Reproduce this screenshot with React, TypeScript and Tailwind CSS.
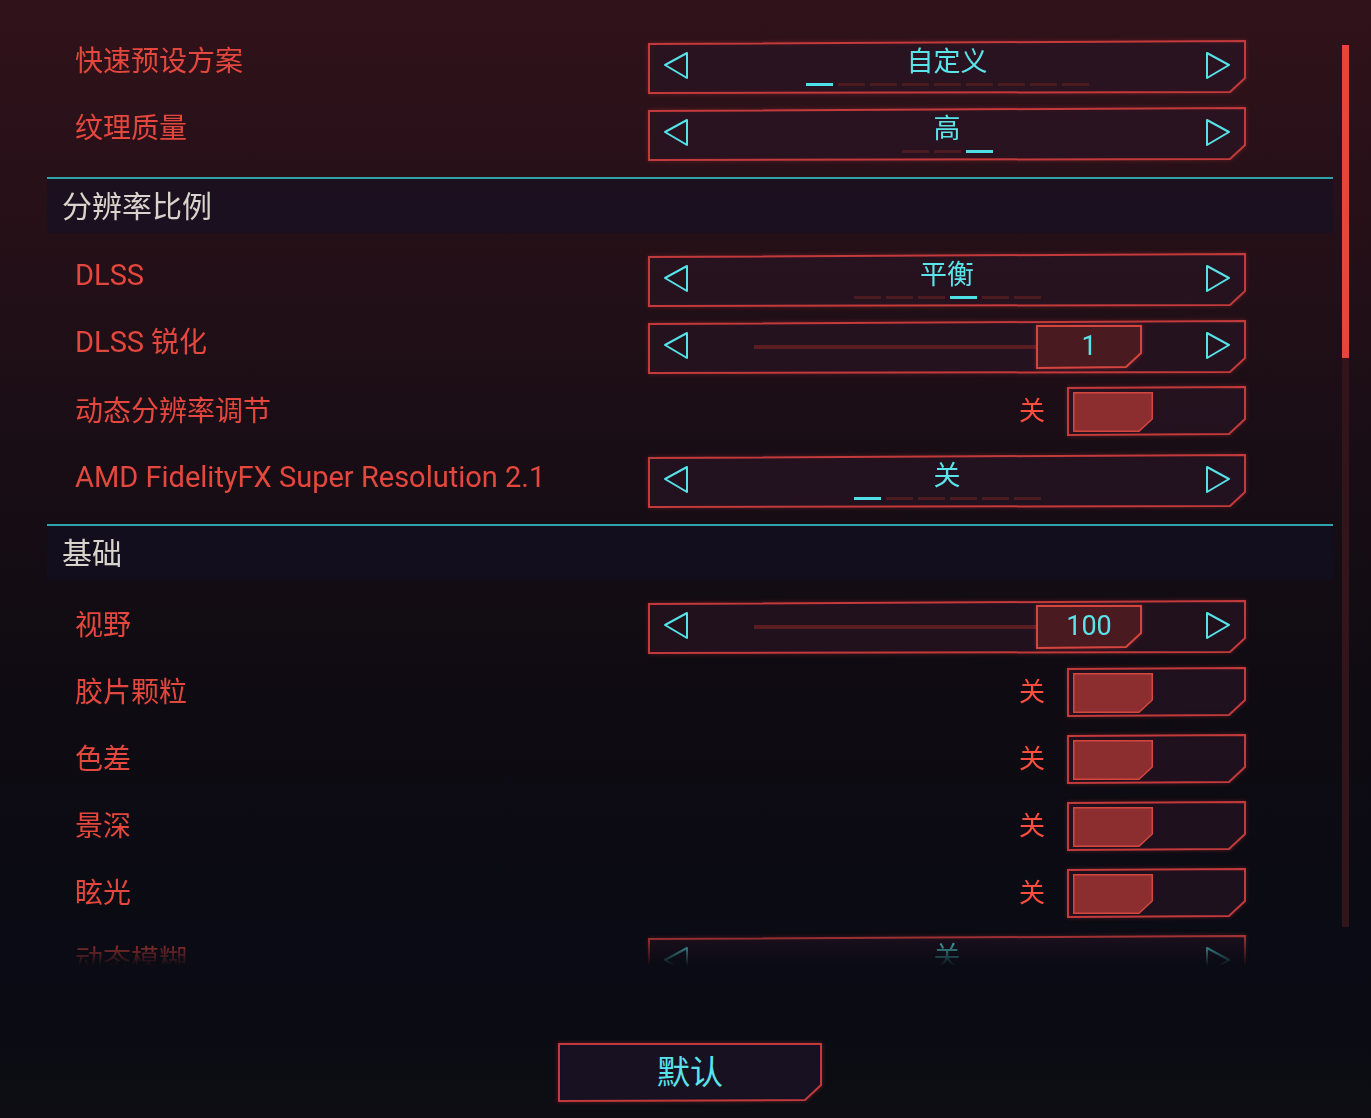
import React from 'react'

const TEAL = '#56e2e8'

type FrameProps = { w: number; h: number; c: number; rise?: number; fill: string; stroke: string; sw?: number }

function Frame({ w, h, c, rise = 0, fill, stroke, sw = 2 }: FrameProps) {
  const o = sw / 2
  const pts = `${o},${o + rise} ${w - o},${o} ${w - o},${h - o - c} ${w - o - c},${h - o - 1} ${o},${h - o}`
  return (
    <svg width={w} height={h} className="absolute inset-0 drop-shadow-[0_0_2px_rgba(220,60,60,0.35)]">
      <polygon points={pts} fill={fill} stroke={stroke} strokeWidth={sw} />
    </svg>
  )
}

function Arrow({ dir }: { dir: 'left' | 'right' }) {
  const pts = dir === 'left' ? '2,14 24,2 24,27' : '2,2 24,14 2,27'
  return (
    <svg width={26} height={29} className="shrink-0 mb-[2px]">
      <polygon points={pts} fill="none" stroke={TEAL} strokeWidth={2} strokeLinejoin="round" />
    </svg>
  )
}

function Selector({ value, count, active }: { value: string; count: number; active: number }) {
  return (
    <div className="relative w-[598px] h-[54px]">
      <Frame w={598} h={54} c={15} rise={3} fill="rgba(12,14,32,0.55)" stroke="#c23a3b" />
      <div className="relative h-full flex items-center px-[15px]">
        <Arrow dir="left" />
        <div className="flex-1 flex flex-col items-center">
          <div className="text-[27px] leading-[30px] text-[#5ae4ea]">{value}</div>
          <div className="mt-[6px] flex gap-[5px]">
            {Array.from({ length: count }).map((_, i) => (
              <div key={i} className={`w-[27px] h-[3px] ${i === active ? 'bg-[#4ee0e6]' : 'bg-[#4c1b20]'}`} />
            ))}
          </div>
        </div>
        <Arrow dir="right" />
      </div>
    </div>
  )
}

function Slider({ value }: { value: string }) {
  return (
    <div className="relative w-[598px] h-[54px]">
      <Frame w={598} h={54} c={15} rise={3} fill="rgba(12,14,32,0.55)" stroke="#c23a3b" />
      <div className="relative h-full flex items-center px-[15px]">
        <Arrow dir="left" />
        <div className="ml-[65px] w-[282px] h-[4px] bg-[#5a1d22]" />
        <div className="relative w-[106px] h-[44px] flex items-center justify-center">
          <Frame w={106} h={44} c={15} fill="#4a1a21" stroke="#d4453f" />
          <span className="relative text-[27px] leading-none text-[#5ae4ea]">{value}</span>
        </div>
        <div className="flex-1" />
        <Arrow dir="right" />
      </div>
    </div>
  )
}

function Toggle({ shift }: { shift: string }) {
  return (
    <div className={`flex items-center gap-[22px] ${shift}`}>
      <span className="text-[26px] leading-none text-[#ff4d40]">关</span>
      <div className="relative w-[179px] h-[50px]">
        <Frame w={179} h={50} c={16} rise={1} fill="rgba(12,14,32,0.55)" stroke="#c23a3b" />
        <div className="relative pl-[6px] pt-[6px]">
          <svg width={80} height={40}>
            <polygon points="0.75,0.75 79.25,0.75 79.25,27 66,39.25 0.75,39.25" fill="#8c2e2f" stroke="#d4473f" strokeWidth={1.5} />
          </svg>
        </div>
      </div>
    </div>
  )
}

function Row({ label, shift, children }: { label: React.ReactNode; shift: string; children: React.ReactNode }) {
  return (
    <div className="h-[67px] flex items-center pl-[28px] pr-[87px]">
      <div className={`flex-1 text-[28px] leading-[34px] text-[#e4473d] ${shift}`}>{label}</div>
      {children}
    </div>
  )
}

function Latin({ children }: { children: React.ReactNode }) {
  return <span className="text-[29px]">{children}</span>
}

function Header({ title }: { title: string }) {
  return (
    <div className="mt-[10px] border-t-2 border-[#2fa3ab] h-[56px] bg-[rgba(16,16,38,0.5)] flex items-center pl-[15px] text-[30px] text-[#d8d4cc]">
      {title}
    </div>
  )
}

export default function App() {
  return (
    <div className="w-full h-[1118px] overflow-hidden bg-[linear-gradient(180deg,#30121a_0%,#261018_20%,#180d15_42%,#0f0b12_62%,#0a0b14_85%,#0d0d13_100%)] font-[Roboto,'Noto_Sans_CJK_SC',sans-serif]">
      <div className="flex">
        <div className="ml-[47px] w-[1286px] h-[966px] overflow-hidden [mask-image:linear-gradient(to_bottom,#000_930px,transparent_966px)]">
          <div className="pt-[33px]">
            <Row label="快速预设方案" shift="-translate-y-[5px]">
              <Selector value="自定义" count={9} active={0} />
            </Row>
            <Row label="纹理质量" shift="-translate-y-[5px]">
              <Selector value="高" count={3} active={2} />
            </Row>
          </div>
          <Header title="分辨率比例" />
          <div className="mt-[13px]">
            <Row label={<Latin>DLSS</Latin>} shift="-translate-y-[4px]">
              <Selector value="平衡" count={6} active={3} />
            </Row>
            <Row label={<><Latin>DLSS</Latin> 锐化</>} shift="-translate-y-[4px]">
              <Slider value="1" />
            </Row>
            <Row label="动态分辨率调节" shift="-translate-y-[2px]">
              <Toggle shift="-translate-y-[3px]" />
            </Row>
            <Row label={<Latin>AMD FidelityFX Super Resolution 2.1</Latin>} shift="-translate-y-[3px]">
              <Selector value="关" count={6} active={0} />
            </Row>
          </div>
          <Header title="基础" />
          <div className="mt-[13px]">
            <Row label="视野" shift="-translate-y-[1px]">
              <Slider value="100" />
            </Row>
            <Row label="胶片颗粒" shift="-translate-y-[1px]">
              <Toggle shift="-translate-y-[2px]" />
            </Row>
            <Row label="色差" shift="-translate-y-[1px]">
              <Toggle shift="-translate-y-[2px]" />
            </Row>
            <Row label="景深" shift="-translate-y-[1px]">
              <Toggle shift="-translate-y-[2px]" />
            </Row>
            <Row label="眩光" shift="-translate-y-[1px]">
              <Toggle shift="-translate-y-[2px]" />
            </Row>
            <Row label="动态模糊" shift="-translate-y-[1px]">
              <Selector value="关" count={6} active={0} />
            </Row>
          </div>
        </div>
        <div className="ml-[9px] pt-[45px]">
          <div className="w-[7px] h-[882px] bg-[#33141a]">
            <div className="h-[313px] bg-[#e8443e]" />
          </div>
        </div>
      </div>
      <div className="ml-[47px] w-[1286px] flex justify-center pt-[77px]">
        <div className="relative w-[264px] h-[59px] flex items-center justify-center">
          <Frame w={264} h={59} c={16} fill="rgba(18,18,36,0.9)" stroke="#c23a3b" />
          <span className="relative text-[33px] leading-none text-[#5ae4ea]">默认</span>
        </div>
      </div>
    </div>
  )
}
